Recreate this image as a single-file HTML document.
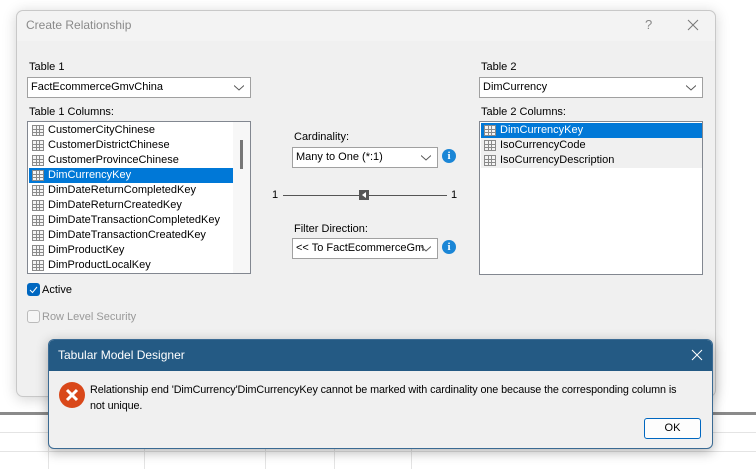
<!DOCTYPE html>
<html><head><style>
*{margin:0;padding:0;box-sizing:border-box}
body{width:756px;height:469px;background:#fff;position:relative;overflow:hidden;font-family:"Liberation Sans",sans-serif;font-size:11px;color:#000}
.a{position:absolute}
.dlg{left:16px;top:10px;width:700px;height:387px;background:#f0f0f0;border:1px solid #c8c8c8;border-radius:7px;box-shadow:0 2px 14px rgba(0,0,0,.18)}
.combo{background:#fff;border:1px solid #a0a0a0;height:21px;line-height:19px;padding-left:3px;white-space:nowrap;overflow:hidden}
.combo svg{position:absolute;right:6px;top:7px}
.list{background:#fff;border:1px solid #828790}
.row{position:absolute;height:15px;line-height:15px;padding-left:19px;white-space:nowrap}
.row i{position:absolute;left:3px;top:2px;width:12px;height:11px;border:1px solid #8a8a8a;background:
linear-gradient(#8a8a8a,#8a8a8a) 0 3px/100% 1px no-repeat,
linear-gradient(#8a8a8a,#8a8a8a) 0 6px/100% 1px no-repeat,
linear-gradient(90deg,#8a8a8a,#8a8a8a) 3px 0/1px 100% no-repeat,
linear-gradient(90deg,#8a8a8a,#8a8a8a) 6px 0/1px 100% no-repeat,#f4f4f4}
.sel{background:#0078d7;color:#fff}
.info{width:14px;height:14px;border-radius:50%;background:#1b86d6;color:#fff;font-weight:bold;font-size:11px;text-align:center;line-height:14px;font-family:"Liberation Serif",serif}
</style></head><body>
<div class="a" style="left:0;top:412px;width:756px;height:3px;background:#8a8a8a"></div>
<div class="a" style="left:0;top:432px;width:756px;height:1px;background:#e4e4e4"></div>
<div class="a" style="left:0;top:451px;width:756px;height:1px;background:#e4e4e4"></div>
<div class="a" style="left:48px;top:415px;width:1px;height:54px;background:#e4e4e4"></div>
<div class="a" style="left:144px;top:415px;width:1px;height:54px;background:#e4e4e4"></div>
<div class="a" style="left:265px;top:415px;width:1px;height:54px;background:#e4e4e4"></div>
<div class="a" style="left:334px;top:415px;width:1px;height:54px;background:#e4e4e4"></div>
<div class="a" style="left:411px;top:415px;width:1px;height:54px;background:#e4e4e4"></div>

<div class="a dlg">
  <div class="a" style="left:0;top:0;width:698px;height:30px;background:#f3f3f3;border-radius:7px 7px 0 0"></div>
  <div class="a" style="left:9px;top:7px;font-size:12px;color:#8a8a8a">Create Relationship</div>
  <div class="a" style="left:628px;top:6px;font-size:13px;color:#888">?</div>
  <svg class="a" style="left:670px;top:8px" width="12" height="12"><path d="M1 1L11 11M11 1L1 11" stroke="#777" stroke-width="1"/></svg>
</div>

<div class="a" style="left:29px;top:61px">Table 1</div>
<div class="a combo" style="left:27px;top:77px;width:224px">FactEcommerceGmvChina<svg width="10" height="6"><path d="M0 0.5L5 5L10 0.5" fill="none" stroke="#555"/></svg></div>
<div class="a" style="left:29px;top:106px">Table 1 Columns:</div>
<div class="a list" style="left:27px;top:121px;width:224px;height:153px">
  <div class="a" style="left:205px;top:0;width:17px;height:151px;background:#f7f7f7"></div>
  <div class="a" style="left:212px;top:18px;width:3px;height:29px;background:#777"></div>
  <div class="row" style="left:1px;top:1px;width:204px"><i></i>CustomerCityChinese</div>
  <div class="row" style="left:1px;top:16px;width:204px"><i></i>CustomerDistrictChinese</div>
  <div class="row" style="left:1px;top:31px;width:204px"><i></i>CustomerProvinceChinese</div>
  <div class="row sel" style="left:1px;top:46px;width:204px"><i></i>DimCurrencyKey</div>
  <div class="row" style="left:1px;top:61px;width:204px"><i></i>DimDateReturnCompletedKey</div>
  <div class="row" style="left:1px;top:76px;width:204px"><i></i>DimDateReturnCreatedKey</div>
  <div class="row" style="left:1px;top:91px;width:204px"><i></i>DimDateTransactionCompletedKey</div>
  <div class="row" style="left:1px;top:106px;width:204px"><i></i>DimDateTransactionCreatedKey</div>
  <div class="row" style="left:1px;top:121px;width:204px"><i></i>DimProductKey</div>
  <div class="row" style="left:1px;top:136px;width:204px"><i></i>DimProductLocalKey</div>
</div>

<div class="a" style="left:294px;top:131px">Cardinality:</div>
<div class="a combo" style="left:292px;top:147px;width:146px">Many to One (*:1)<svg width="10" height="6"><path d="M0 0.5L5 5L10 0.5" fill="none" stroke="#555"/></svg></div>
<div class="a info" style="left:442px;top:149px">i</div>
<div class="a" style="left:272px;top:189px">1</div>
<div class="a" style="left:283px;top:195px;width:164px;height:1px;background:#555"></div>
<div class="a" style="left:359px;top:190px;width:10px;height:10px;background:#555"></div>
<svg class="a" style="left:361px;top:192px" width="6" height="6"><path d="M5 0L1 3L5 6Z" fill="#fff"/></svg>
<div class="a" style="left:451px;top:189px">1</div>
<div class="a" style="left:294px;top:223px">Filter Direction:</div>
<div class="a combo" style="left:292px;top:238px;width:146px;padding-right:20px">&lt;&lt; To FactEcommerceGm<svg width="10" height="6"><path d="M0 0.5L5 5L10 0.5" fill="none" stroke="#555"/></svg></div>
<div class="a info" style="left:442px;top:240px">i</div>

<div class="a" style="left:481px;top:61px">Table 2</div>
<div class="a combo" style="left:479px;top:77px;width:224px">DimCurrency<svg width="10" height="6"><path d="M0 0.5L5 5L10 0.5" fill="none" stroke="#555"/></svg></div>
<div class="a" style="left:481px;top:106px">Table 2 Columns:</div>
<div class="a list" style="left:479px;top:121px;width:224px;height:154px">
  <div class="row sel" style="left:1px;top:1px;width:221px"><i></i>DimCurrencyKey</div>
  <div class="row" style="left:1px;top:16px;width:221px;background:#f0f0f0"><i></i>IsoCurrencyCode</div>
  <div class="row" style="left:1px;top:31px;width:221px;background:#f0f0f0"><i></i>IsoCurrencyDescription</div>
</div>

<div class="a" style="left:27px;top:283px;width:13px;height:13px;background:#0067c0;border-radius:3px"></div>
<svg class="a" style="left:29px;top:285px" width="9" height="9"><path d="M1 5L3.5 7.5L8 2" fill="none" stroke="#fff" stroke-width="1"/></svg>
<div class="a" style="left:42px;top:284px">Active</div>
<div class="a" style="left:27px;top:310px;width:13px;height:13px;border:1px solid #bbb;border-radius:3px;background:#f6f6f6"></div>
<div class="a" style="left:42px;top:311px;color:#999">Row Level Security</div>

<div class="a" style="left:48px;top:339px;width:665px;height:110px;background:#f0f0f0;border:1px solid #3a6a93;border-radius:6px;box-shadow:0 3px 12px rgba(0,0,0,.3);overflow:hidden">
  <div class="a" style="left:0;top:0;width:665px;height:31px;background:#245a84"></div>
  <div class="a" style="left:9px;top:8px;color:#fff;font-size:12px">Tabular Model Designer</div>
  <svg class="a" style="left:642px;top:9px" width="12" height="12"><path d="M1 1L11 11M11 1L1 11" stroke="#fff" stroke-width="1"/></svg>
  <div class="a" style="left:10px;top:42px;width:26px;height:26px;border-radius:50%;background:#d9481a"></div>
  <svg class="a" style="left:16px;top:48px" width="14" height="14"><path d="M2 2L12 12M12 2L2 12" stroke="#fff" stroke-width="3"/></svg>
  <div class="a" style="left:41px;top:42px;line-height:16px;width:620px;white-space:nowrap;font-size:10.8px;letter-spacing:-0.1px">Relationship end 'DimCurrency'DimCurrencyKey cannot be marked with cardinality one because the corresponding column is<br>not unique.</div>
  <div class="a" style="left:595px;top:78px;width:57px;height:21px;background:#fdfdfd;border:1px solid #0067c0;border-radius:3px;text-align:center;line-height:19px">OK</div>
</div>
</body></html>
